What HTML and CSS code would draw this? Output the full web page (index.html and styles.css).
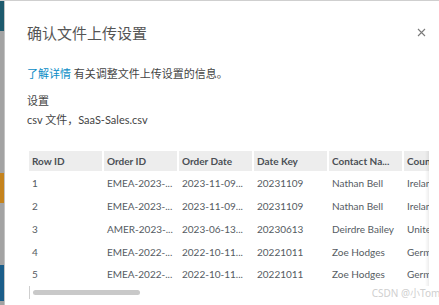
FILE: index.html
```html
<!DOCTYPE html>
<html lang="zh-CN">
<head>
  <meta charset="UTF-8">
  <meta name="viewport" content="width=device-width, initial-scale=1.0">
  <title>确认文件上传设置</title>
  <link rel="stylesheet" href="styles.css">
</head>
<body>
  <div class="fondo">
    <div class="franja teal"></div>
    <div class="franja gris alta"></div>
    <div class="franja naranja"></div>
    <div class="franja gris media"></div>
    <div class="franja azul"></div>
    <div class="franja gris"></div>
  </div>

  <div class="modal">
    <div class="cabecera">
      <h1>确认文件上传设置</h1>
      <svg class="cerrar" width="9" height="9" viewBox="0 0 9 9">
        <path d="M1 1L8 8M8 1L1 8" stroke="#7a7a7a" stroke-width="1.1" fill="none"/>
      </svg>
    </div>

    <p class="info"><a href="#">了解详情</a> 有关调整文件上传设置的信息。</p>
    <p class="etiqueta">设置</p>
    <p class="archivo">csv 文件，SaaS-Sales.csv</p>

    <div class="tabla-wrap">
      <div class="tabla">
        <div class="fila encabezado">
          <div class="celda">Row ID</div>
          <div class="celda">Order ID</div>
          <div class="celda">Order Date</div>
          <div class="celda">Date Key</div>
          <div class="celda">Contact Na...</div>
          <div class="celda">Country</div>
        </div>
        <div class="fila">
          <div class="celda">1</div>
          <div class="celda">EMEA-2023-...</div>
          <div class="celda">2023-11-09...</div>
          <div class="celda">20231109</div>
          <div class="celda">Nathan Bell</div>
          <div class="celda">Ireland</div>
        </div>
        <div class="fila">
          <div class="celda">2</div>
          <div class="celda">EMEA-2023-...</div>
          <div class="celda">2023-11-09...</div>
          <div class="celda">20231109</div>
          <div class="celda">Nathan Bell</div>
          <div class="celda">Ireland</div>
        </div>
        <div class="fila">
          <div class="celda">3</div>
          <div class="celda">AMER-2023-...</div>
          <div class="celda">2023-06-13...</div>
          <div class="celda">20230613</div>
          <div class="celda">Deirdre Bailey</div>
          <div class="celda">United States</div>
        </div>
        <div class="fila">
          <div class="celda">4</div>
          <div class="celda">EMEA-2022-...</div>
          <div class="celda">2022-10-11...</div>
          <div class="celda">20221011</div>
          <div class="celda">Zoe Hodges</div>
          <div class="celda">Germany</div>
        </div>
        <div class="fila">
          <div class="celda">5</div>
          <div class="celda">EMEA-2022-...</div>
          <div class="celda">2022-10-11...</div>
          <div class="celda">20221011</div>
          <div class="celda">Zoe Hodges</div>
          <div class="celda">Germany</div>
        </div>
      </div>
      <div class="sombra"></div>
    </div>

    <div class="scroll">
      <span class="tope"></span>
      <span class="barra"></span>
    </div>

    <div class="marca">CSDN @小Tomkk</div>
  </div>
</body>
</html>
```

FILE: styles.css
```css
body{
  margin: 0;
  width: 439px;
  height: 305px;
  overflow: hidden;
  display: flex;
  background-color: #fff;
  font-family: Lato, "Noto Sans CJK SC", sans-serif;
  border-top: 1px solid #cfcfcf;
  box-sizing: border-box;
}

.fondo{
  width: 4px;
  display: flex;
  flex-direction: column;
  border-right: 1px solid #c4c4c4;
}
.franja{
  flex: 1;
  background-color: #a3a3a3;
}
.franja.teal{
  flex: 0 0 30px;
  background-color: #1d5a6d;
}
.franja.alta{
  flex: 0 0 142px;
}
.franja.naranja{
  flex: 0 0 30px;
  background-color: #c5831d;
}
.franja.media{
  flex: 0 0 62px;
}
.franja.azul{
  flex: 0 0 36px;
  background-color: #1b5e8a;
}

.modal{
  flex: 1;
  position: relative;
  padding: 0 0 0 22px;
  color: #444;
}

.cabecera{
  display: flex;
  align-items: center;
  justify-content: space-between;
  height: 63px;
  padding-right: 13px;
}
.cabecera h1{
  margin: 0;
  font-size: 15px;
  font-weight: normal;
  color: #555;
}

.info{
  margin: 0;
  padding-top: 2px;
  font-size: 11px;
  line-height: 16px;
  color: #444;
}
.info a{
  color: #0a8dc6;
  text-decoration: none;
}
.etiqueta{
  margin: 11px 0 0 0;
  font-size: 11px;
  line-height: 16px;
}
.archivo{
  margin: 3px 0 0 0;
  font-size: 11px;
  line-height: 16px;
}

.tabla-wrap{
  position: relative;
  margin: 23px 0 0 2px;
  width: 400px;
  overflow: hidden;
}
.tabla{
  display: flex;
  flex-direction: column;
  width: max-content;
}
.fila{
  display: grid;
  grid-template-columns: repeat(6, 73px);
  column-gap: 2px;
  height: 22.75px;
  align-items: center;
  font-size: 10px;
  color: #555b62;
}
.fila.encabezado{
  height: 20px;
  margin-bottom: 1px;
  font-weight: bold;
  color: #4a4f55;
}
.encabezado .celda{
  background-color: #ededed;
  height: 20px;
  line-height: 20px;
}
.celda{
  padding-left: 3px;
  white-space: nowrap;
  overflow: hidden;
}
.sombra{
  position: absolute;
  top: 0;
  right: 0;
  width: 4px;
  height: 100%;
  background: linear-gradient(to right, rgba(0,0,0,0), rgba(0,0,0,0.07));
}

.scroll{
  display: flex;
  align-items: center;
  margin: 0 0 0 2px;
  height: 13px;
}
.tope{
  width: 1px;
  height: 13px;
  background-color: #cfcfcf;
}
.barra{
  margin-left: 3px;
  width: 107px;
  height: 5px;
  border-radius: 3px;
  background-color: #c9c9c9;
}

.marca{
  position: absolute;
  right: -12px;
  bottom: 5px;
  font-family: "Noto Sans", "Noto Sans CJK SC", sans-serif;
  font-size: 10px;
  color: #cfcfcf;
}
```
